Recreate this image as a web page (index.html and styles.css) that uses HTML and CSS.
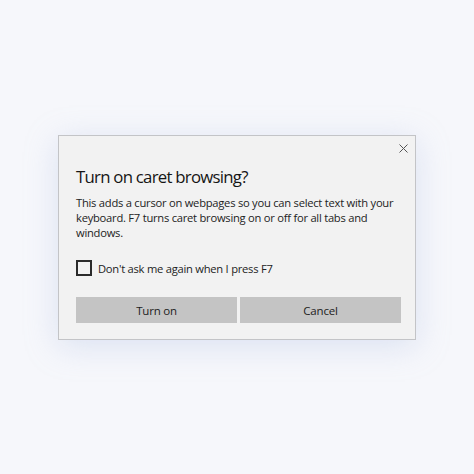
FILE: index.html
```html
<!DOCTYPE html>
<html>
<head>
<meta charset="utf-8">
<link rel="stylesheet" href="styles.css">
</head>
<body>
<div class="stage">
  <div class="dialog">
    <div class="topbar">
      <svg class="close" width="9" height="9" viewBox="0 0 9 9"><path d="M0.5 0.5 L8.5 8.5 M8.5 0.5 L0.5 8.5" stroke="#555" stroke-width="1" fill="none"/></svg>
    </div>
    <div class="content">
      <h1 class="title">Turn on caret browsing?</h1>
      <p class="desc">This adds a cursor on webpages so you can select text with your keyboard. F7 turns caret browsing on or off for all tabs and windows.</p>
      <label class="check"><span class="box"></span><span class="label">Don't ask me again when I press F7</span></label>
      <div class="buttons">
        <div class="btn">Turn on</div>
        <div class="btn">Cancel</div>
      </div>
    </div>
  </div>
</div>
</body>
</html>
```
FILE: styles.css
```css
html, body {
  margin: 0;
  padding: 0;
  background: #f6f7fb;
}
body {
  width: 474px;
  height: 474px;
  font-family: "Open Sans", "Noto Sans", sans-serif;
  color: #222;
}
.stage {
  padding-top: 135px;
  padding-left: 58px;
}
.dialog {
  box-sizing: border-box;
  width: 358px;
  height: 205px;
  background: #f2f2f2;
  border: 1px solid #c3c4c7;
  box-shadow: 0 6px 30px rgba(170, 185, 225, 0.35);
  display: flex;
  flex-direction: column;
}
.topbar {
  display: flex;
  justify-content: flex-end;
  padding: 8px 7px 0 0;
  height: 22px;
}
.close {
  display: block;
}
.content {
  padding: 0 14px 0 17px;
}
.title {
  margin: 0;
  font-weight: 400;
  font-size: 16.8px;
  line-height: 22px;
  color: #151515;
  letter-spacing: -0.75px;
}
.desc {
  margin: 7px 0 0 0;
  font-size: 11.2px;
  line-height: 15px;
  color: #222;
  letter-spacing: -0.25px;
}
.check {
  display: flex;
  align-items: center;
  gap: 6px;
  margin-top: 20px;
}
.box {
  box-sizing: border-box;
  width: 16px;
  height: 16px;
  border: 2px solid #2b2b2b;
  background: #f2f2f2;
}
.label {
  font-size: 11.2px;
  color: #222;
  letter-spacing: -0.25px;
}
.buttons {
  display: flex;
  gap: 3px;
  margin-top: 21px;
}
.btn {
  flex: 1;
  height: 26px;
  background: #c4c4c4;
  display: flex;
  align-items: center;
  justify-content: center;
  font-size: 11.5px;
  color: #222;
  letter-spacing: -0.2px;
}
```
